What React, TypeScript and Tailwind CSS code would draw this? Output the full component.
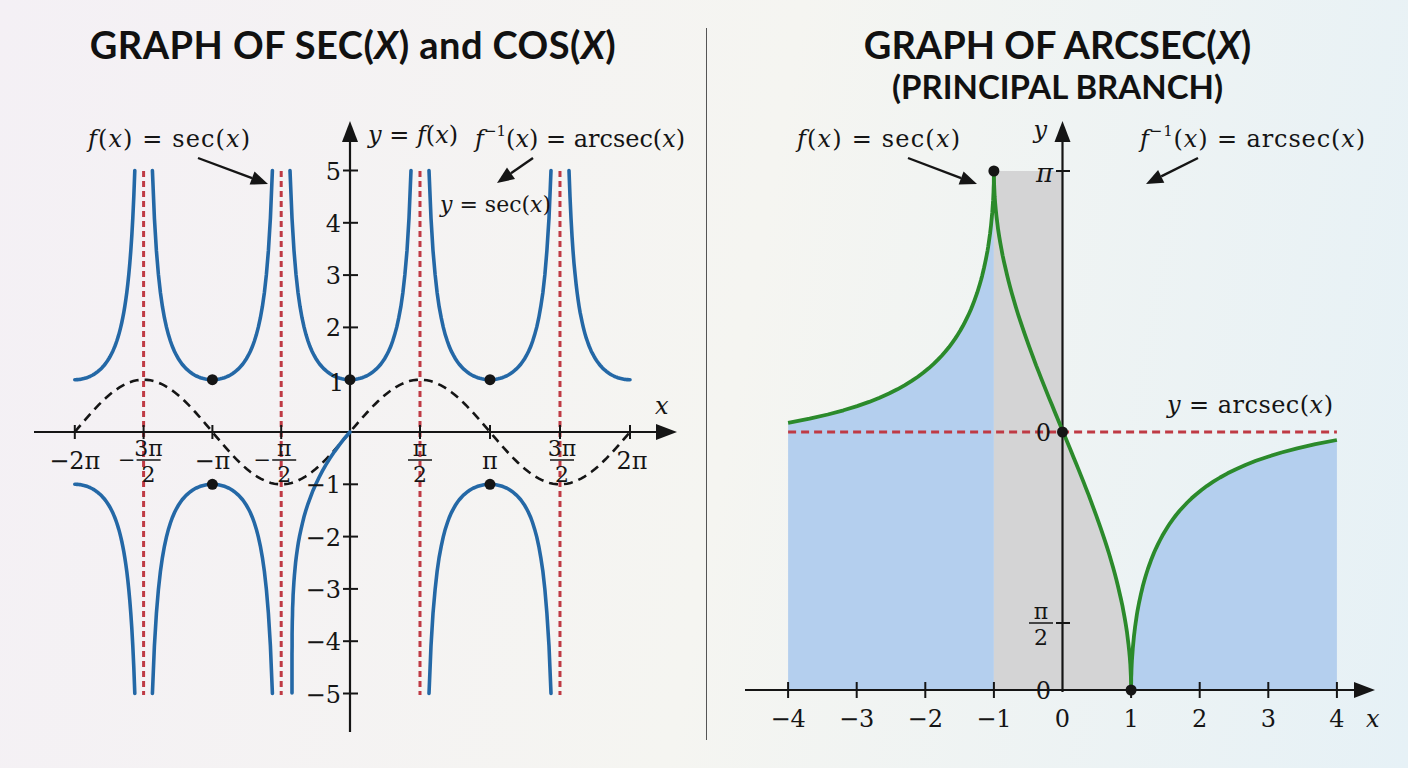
import React from 'react';

const MATH = '"DejaVu Serif", "Liberation Serif", serif';
const INK = '#151515';
const BLUE = '#2468a6';
const RED = '#bf3a44';
const GREEN = '#2b8a2b';

// left chart: radians -> px (the negative side is drawn a touch tighter)
const LX = (u: number) => 350 + u * (u < 0 ? 43.8 : 44.56);
const LY = (v: number) => 432 - v * 52.3;
// right chart
const RX = (t: number) => 1062.5 + t * 68.6;

const pt = (x: number, y: number) => `${x.toFixed(1)},${y.toFixed(1)}`;

const sample = (n: number, f: (k: number) => [number, number]) => {
  const out: string[] = [];
  for (let i = 0; i <= n; i++) {
    const [x, y] = f(i / n);
    out.push(pt(x, y));
  }
  return out;
};

const CLIP = Math.acos(0.2);
const PI = Math.PI;

const secBranch = (c: number, a: number, b: number, sign: number) => {
  const cx = LX(c);
  const sc = c < 0 || (c === 0 && a < 0) ? 43.8 : 44.56;
  return (
    'M' +
    sample(60, (k) => {
      const u = a + (b - a) * k;
      const s = c === 0 ? (u < 0 ? 43.8 : 44.56) : sc;
      return [cx + u * s, LY(sign / Math.cos(u))];
    }).join(' L')
  );
};

const secPaths = [
  secBranch(-2 * PI, 0, CLIP, 1),
  secBranch(-PI, -CLIP, CLIP, 1),
  secBranch(0, -CLIP, CLIP, 1),
  secBranch(PI, -CLIP, CLIP, 1),
  secBranch(2 * PI, -CLIP, 0, 1),
  secBranch(-2 * PI, 0, CLIP, -1),
  secBranch(-PI, -CLIP, CLIP, -1),
  secBranch(PI, -CLIP, CLIP, -1),
  // odd branch leaving the origin
  'M' + sample(40, (k) => [350 - 58 * (1 - Math.pow(1 - k, 4)), 432 + k * 261]).join(' L'),
];

const sinPath =
  'M' +
  sample(160, (k) => {
    const u = -2 * PI + 4 * PI * k;
    return [LX(u), LY(Math.sin(u))];
  }).join(' L');

// right chart curves
const HMAX = Math.acos(0.25);
const leftBranch = sample(60, (k) => {
  const h = HMAX * (1 - k);
  return [RX(-1 / Math.cos(h)), 432 - 261 * (1 - h / 1.366)];
});
const middle = sample(80, (k) => {
  const th = PI * (1 - k);
  return [RX(Math.cos(th)), 690 - (th / PI) * 519];
});
const lowerMiddle = sample(40, (k) => {
  const th = (PI / 2) * (1 - k);
  return [RX(Math.cos(th)), 690 - (th / PI) * 519];
});
const rightBranch = sample(60, (k) => {
  const h = HMAX * k;
  return [RX(1 / Math.cos(h)), 690 - (250 * h) / HMAX];
});

const greenPath = 'M' + [...leftBranch, ...middle, ...rightBranch].join(' L');
const leftFill = `M${pt(RX(-4), 690)} L${leftBranch.join(' L')} L${pt(RX(-1), 690)} Z`;
const rightFill = `M${pt(RX(1), 690)} L${rightBranch.join(' L')} L${pt(RX(4), 690)} Z`;
const grayFill = `M${pt(RX(-1), 171)} L${pt(1062.5, 171)} L${lowerMiddle.join(' L')} L${pt(RX(-1), 690)} Z`;

const I = ({ children }: { children: React.ReactNode }) => <tspan fontStyle="italic">{children}</tspan>;

const Arrow = ({ x1, y1, x2, y2 }: { x1: number; y1: number; x2: number; y2: number }) => {
  const a = Math.atan2(y2 - y1, x2 - x1);
  const L = 17;
  const W = 7;
  const bx = x2 - L * Math.cos(a);
  const by = y2 - L * Math.sin(a);
  const px = -Math.sin(a) * W;
  const py = Math.cos(a) * W;
  return (
    <g>
      <line x1={x1} y1={y1} x2={bx} y2={by} stroke={INK} strokeWidth={2.4} />
      <polygon points={`${pt(x2, y2)} ${pt(bx + px, by + py)} ${pt(bx - px, by - py)}`} fill={INK} />
    </g>
  );
};

const Frac = ({ x, y, num, minus }: { x: number; y: number; num: string; minus?: boolean }) => (
  <g>
    {minus && (
      <text x={x - 13} y={y + 7} textAnchor="end" fontSize={21}>
        −
      </text>
    )}
    <text x={x} y={y - 4} textAnchor="middle" fontSize={22}>
      {num}
    </text>
    <line x1={x - 12} x2={x + 12} y1={y} y2={y} stroke={INK} strokeWidth={1.5} />
    <text x={x} y={y + 22} textAnchor="middle" fontSize={22}>
      2
    </text>
  </g>
);

const Dot = ({ x, y }: { x: number; y: number }) => <circle cx={x} cy={y} r={5.5} fill={INK} />;

const Sup = () => (
  <>
    <tspan dy={-11} fontSize={15}>
      −1
    </tspan>
    <tspan dy={11}>(</tspan>
  </>
);

function SecChart() {
  const yTicks = [5, 4, 3, 2, -1, -2, -3, -4, -5];
  const xTicks = [-4, -3, -2, -1, 1, 2, 3, 4].map((k) => LX((k * PI) / 2));
  return (
    <svg viewBox="0 110 706 658" className="w-[706px] h-[658px]" fontFamily={MATH} fill={INK} fontSize={24}>
      {/* asymptotes */}
      {[-3, -1, 1, 3].map((k) => (
        <line key={k} x1={LX((k * PI) / 2)} x2={LX((k * PI) / 2)} y1={171} y2={695} stroke={RED} strokeWidth={3} strokeDasharray="6 4" />
      ))}
      {/* axes */}
      <line x1={34} y1={432} x2={660} y2={432} stroke={INK} strokeWidth={2.2} />
      <polygon points="677,432 656,424 656,440" fill={INK} />
      <line x1={350} y1={732} x2={350} y2={138} stroke={INK} strokeWidth={2.2} />
      <polygon points="350,121 342,142 358,142" fill={INK} />
      {yTicks.map((v) => (
        <line key={v} x1={343} x2={358} y1={LY(v)} y2={LY(v)} stroke={INK} strokeWidth={2} />
      ))}
      {xTicks.map((x) => (
        <line key={x} x1={x} x2={x} y1={425} y2={439} stroke={INK} strokeWidth={2} />
      ))}
      {/* dashed wave */}
      <path d={sinPath} fill="none" stroke={INK} strokeWidth={2.6} strokeDasharray="9 6" />
      {/* sec branches */}
      {secPaths.map((d, i) => (
        <path key={i} d={d} fill="none" stroke={BLUE} strokeWidth={3.6} strokeLinecap="round" />
      ))}
      <Dot x={LX(-PI)} y={LY(1)} />
      <Dot x={350} y={LY(1)} />
      <Dot x={LX(PI)} y={LY(1)} />
      <Dot x={LX(-PI)} y={LY(-1)} />
      <Dot x={LX(PI)} y={LY(-1)} />

      {/* y labels */}
      {[5, 4, 3, 2].map((v) => (
        <text key={v} x={341} y={LY(v) + 9} textAnchor="end">
          {v}
        </text>
      ))}
      <text x={344} y={391} textAnchor="end">
        1
      </text>
      {[-1, -2, -3, -4, -5].map((v) => (
        <text key={v} x={341} y={LY(v) + 9} textAnchor="end">
          −{Math.abs(v)}
        </text>
      ))}

      {/* x labels */}
      <text x={LX(-2 * PI)} y={469} textAnchor="middle">
        −2π
      </text>
      <Frac x={LX((-3 * PI) / 2) + 5} y={460} num="3π" minus />
      <text x={LX(-PI)} y={469} textAnchor="middle">
        −π
      </text>
      <Frac x={LX(-PI / 2) + 3} y={460} num="π" minus />
      <Frac x={LX(PI / 2)} y={460} num="π" />
      <text x={LX(PI)} y={469} textAnchor="middle">
        π
      </text>
      <Frac x={LX((3 * PI) / 2) + 2} y={460} num="3π" />
      <text x={LX(2 * PI) + 2} y={469} textAnchor="middle">
        2π
      </text>
      <text x={655} y={414}>
        <I>x</I>
      </text>

      {/* annotations */}
      <text x={88} y={147} textLength={162} lengthAdjust="spacing">
        <I>f</I>(<I>x</I>) = sec(<I>x</I>)
      </text>
      <Arrow x1={198} y1={158} x2={268} y2={184} />
      <text x={368} y={143}>
        <I>y</I> = <I>f</I>(<I>x</I>)
      </text>
      <text x={475} y={147}>
        <I>f</I>
        <Sup />
        <I>x</I>) = arcsec(<I>x</I>)
      </text>
      <Arrow x1={533} y1={158} x2={497} y2={183} />
      <text x={440} y={212} fontSize={22}>
        <I>y</I> = sec(<I>x</I>)
      </text>
    </svg>
  );
}

function ArcsecChart() {
  return (
    <svg viewBox="707 110 701 658" className="w-[701px] h-[658px]" fontFamily={MATH} fill={INK} fontSize={24}>
      <path d={leftFill} fill="#b4cfee" />
      <path d={rightFill} fill="#b4cfee" />
      <path d={grayFill} fill="#d4d4d5" />
      <line x1={RX(-4)} x2={RX(4)} y1={432} y2={432} stroke={RED} strokeWidth={2.8} strokeDasharray="8 5" />

      {/* axes */}
      <line x1={745} y1={690} x2={1356} y2={690} stroke={INK} strokeWidth={2.2} />
      <polygon points="1375,690 1354,682 1354,698" fill={INK} />
      <line x1={1062.5} y1={692} x2={1062.5} y2={138} stroke={INK} strokeWidth={2.2} />
      <polygon points="1062.5,121 1054.5,142 1070.5,142" fill={INK} />
      {[-4, -3, -2, -1, 1, 2, 3, 4].map((t) => (
        <line key={t} x1={RX(t)} x2={RX(t)} y1={682} y2={698} stroke={INK} strokeWidth={2} />
      ))}
      <line x1={1056} x2={1070} y1={171} y2={171} stroke={INK} strokeWidth={2} />
      <line x1={1056} x2={1070} y1={623} y2={623} stroke={INK} strokeWidth={2} />

      <path d={greenPath} fill="none" stroke={GREEN} strokeWidth={3.8} strokeLinejoin="round" />
      <Dot x={RX(-1)} y={171} />
      <Dot x={1062.5} y={432} />
      <Dot x={RX(1)} y={690} />

      {/* labels */}
      {[-4, -3, -2, -1, 0, 1, 2, 3, 4].map((t) => (
        <text key={t} x={RX(t)} y={727} textAnchor="middle">
          {t < 0 ? `−${-t}` : t}
        </text>
      ))}
      <text x={1366} y={727}>
        <I>x</I>
      </text>
      <text x={1053} y={182} textAnchor="end" fontSize={26}>
        <I>π</I>
      </text>
      <text x={1051} y={441} textAnchor="end">
        0
      </text>
      <text x={1051} y={699} textAnchor="end">
        0
      </text>
      <Frac x={1041} y={623} num="π" />
      <text x={1047} y={138} textAnchor="end">
        <I>y</I>
      </text>

      <text x={797} y={147} textLength={163} lengthAdjust="spacing">
        <I>f</I>(<I>x</I>) = sec(<I>x</I>)
      </text>
      <Arrow x1={908} y1={158} x2={977} y2={184} />
      <text x={1140} y={147} textLength={225} lengthAdjust="spacing">
        <I>f</I>
        <Sup />
        <I>x</I>) = arcsec(<I>x</I>)
      </text>
      <Arrow x1={1198} y1={158} x2={1146} y2={184} />
      <text x={1167} y={413} textLength={166} lengthAdjust="spacing">
        <I>y</I> = arcsec(<I>x</I>)
      </text>
    </svg>
  );
}

export default function App() {
  return (
    <div className="w-[1408px] h-[768px] flex overflow-hidden bg-[linear-gradient(100deg,#f4f0f5_0%,#f5f5f1_52%,#e6f1f6_100%)] text-[#111] font-['Lato',sans-serif]">
      <section className="w-[706px] flex flex-col">
        <div className="h-[110px] flex flex-col items-center pt-[25px]">
          <h1 className="text-[38px] leading-none font-bold tracking-[0.45px]">
            GRAPH OF SEC(<span className="italic">X</span>) and COS(<span className="italic">X</span>)
          </h1>
        </div>
        <SecChart />
      </section>
      <div className="w-px my-[28px] bg-[#555]" />
      <section className="flex-1 flex flex-col">
        <div className="h-[110px] flex flex-col items-center pt-[25px]">
          <h1 className="text-[38px] leading-none font-bold">
            GRAPH OF ARCSEC(<span className="italic">X</span>)
          </h1>
          <h2 className="mt-[7px] text-[33px] leading-none font-bold">(PRINCIPAL BRANCH)</h2>
        </div>
        <ArcsecChart />
      </section>
    </div>
  );
}
